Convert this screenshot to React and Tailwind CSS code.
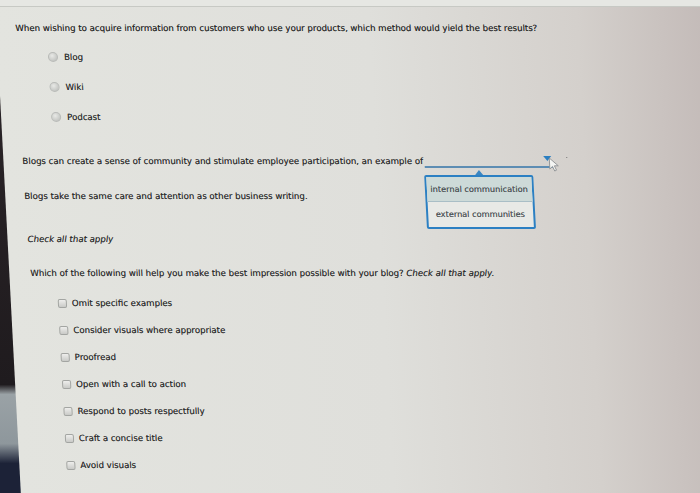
import React from 'react';

// Multiple-choice quiz page, photographed from a monitor

const radioOptions = ['Blog', 'Wiki', 'Podcast'];

const checkOptions = [
  'Omit specific examples',
  'Consider visuals where appropriate',
  'Proofread',
  'Open with a call to action',
  'Respond to posts respectfully',
  'Craft a concise title',
  'Avoid visuals',
];

function Radio() {
  return (
    <span className="w-[10px] h-[10px] rounded-full border border-[#b9bbb8] bg-[radial-gradient(circle_at_40%_35%,#e8e9e6,#b7b9b6)] shrink-0" />
  );
}

function Checkbox() {
  return (
    <span className="w-[9px] h-[9px] rounded-[2px] border border-[#a3a5a2] bg-[linear-gradient(#eeeeec,#c9cac7)] shrink-0" />
  );
}

// Cursor arrow - the mouse pointer over the blank
function Cursor() {
  return (
    <svg width="11" height="15" viewBox="0 0 11 15" className="absolute right-[-7px] top-[2px]">
      <path d="M1 1 L1 12 L3.8 9.4 L5.8 14 L7.6 13.2 L5.7 8.8 L9.6 8.8 Z" fill="#f4f5f3" stroke="#8d9193" strokeWidth="0.9" />
    </svg>
  );
}

export default function App() {
  return (
    <div className="w-[700px] h-[493px] overflow-hidden bg-[linear-gradient(#d9dad5_0%,#2a2427_18%,#1f1b1e_78%,#9aa2a6_80%,#8e979c_90%,#1c2237_94%)] font-['DejaVu_Sans',Verdana,sans-serif]">
      <div className="w-[745px] h-[520px] -ml-[5px] origin-top-left skew-x-3 bg-[linear-gradient(90deg,#e3e4df_0%,#dfdfdb_50%,#d4d0cc_78%,#bfb5b3_100%)] text-[8.6px] text-[#2c2c2c] [text-shadow:0_0_0.4px_rgba(40,40,40,0.6)]">

        {/* Top bar edge */}
        <div className="h-[7px] border-b border-[#c7c9c4] bg-[#e6e7e3]" />

        {/* Question 1 */}
        <div className="pl-[19px] pt-[15px] leading-[12px] text-[#262626]">
          When wishing to acquire information from customers who use your products, which method would yield the best results?
        </div>
        <div className="flex flex-col gap-[18px] pt-[17px] pl-[50px]">
          {radioOptions.map((opt) => (
            <div key={opt} className="flex items-center gap-[6px] h-[12px]">
              <Radio />
              <span>{opt}</span>
            </div>
          ))}
        </div>

        {/* Question 2 - fill in the blank with open dropdown */}
        <div className="flex items-start pl-[19px] pt-[32px]">
          <span className="leading-[12px]">
            Blogs can create a sense of community and stimulate employee participation, an example of
          </span>
          <span className="relative ml-[1px] w-[128px] h-[13px] border-b-2 border-[#5d8db3]">
            <span className="absolute right-[1px] top-[1px] w-0 h-0 border-l-[4px] border-r-[4px] border-t-[5px] border-l-transparent border-r-transparent border-t-[#2b7fc1]" />
            <Cursor />
            <span className="absolute left-[50px] top-[15px] w-0 h-0 border-l-[4px] border-r-[4px] border-b-[5px] border-l-transparent border-r-transparent border-b-[#3a86c2]" />
            <div className="absolute left-[-1px] top-[20px] w-[109px] border-2 border-[#2c80c3] rounded-[2px] bg-[#e8e9e6] text-[#4d5559] text-[8.2px] z-10">
              <div className="h-[25px] flex items-center justify-center bg-[#cddad8] border-b border-[#a9bec6]">internal communication</div>
              <div className="h-[25px] flex items-center justify-center">external communities</div>
            </div>
          </span>
          <span className="ml-[14px] mt-[2px] w-[1px] h-[1px] bg-[#777]" />
        </div>

        <div className="pl-[19px] pt-[22px] leading-[12px]">
          Blogs take the same care and attention as other business writing.
        </div>

        <div className="pl-[20px] pt-[31px] leading-[12px] italic">Check all that apply</div>

        {/* Question 3 - check all that apply */}
        <div className="pl-[21px] pt-[22px] leading-[12px]">
          Which of the following will help you make the best impression possible with your blog? <i>Check all that apply.</i>
        </div>
        <div className="flex flex-col gap-[15px] pt-[18px] pl-[47px]">
          {checkOptions.map((opt) => (
            <div key={opt} className="flex items-center gap-[5px] h-[12px]">
              <Checkbox />
              <span>{opt}</span>
            </div>
          ))}
        </div>
      </div>
    </div>
  );
}
